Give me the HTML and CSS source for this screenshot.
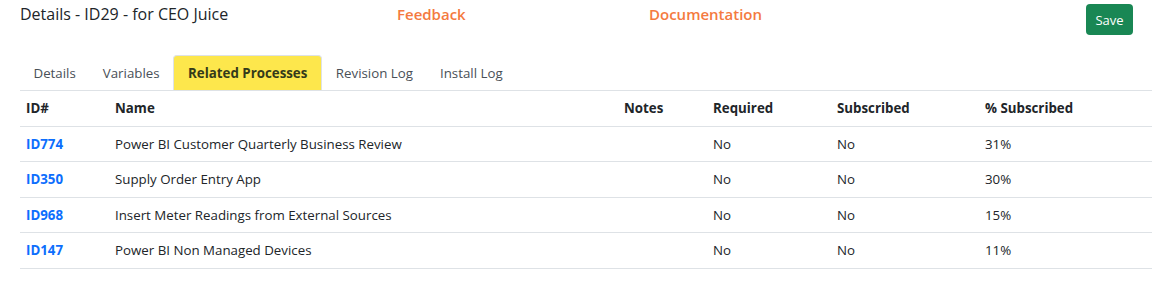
FILE: index.html
```html
<!DOCTYPE html>
<html>
<head>
<meta charset="utf-8">
<link rel="stylesheet" href="styles.css">
</head>
<body>
<div class="page">
  <div class="topbar">
    <div class="title">Details - ID29 - for CEO Juice</div>
    <a class="toplink feedback">Feedback</a>
    <a class="toplink docs">Documentation</a>
    <button class="save">Save</button>
  </div>
  <ul class="tabs">
    <li class="tab">Details</li>
    <li class="tab">Variables</li>
    <li class="tab active">Related Processes</li>
    <li class="tab">Revision Log</li>
    <li class="tab">Install Log</li>
  </ul>
  <table class="grid">
    <colgroup>
      <col class="c-id"><col class="c-name"><col class="c-notes"><col class="c-req"><col class="c-sub"><col class="c-pct">
    </colgroup>
    <thead>
      <tr><th>ID#</th><th>Name</th><th>Notes</th><th>Required</th><th>Subscribed</th><th>% Subscribed</th></tr>
    </thead>
    <tbody>
      <tr><td><a class="idlink">ID774</a></td><td>Power BI Customer Quarterly Business Review</td><td></td><td>No</td><td>No</td><td>31%</td></tr>
      <tr><td><a class="idlink">ID350</a></td><td>Supply Order Entry App</td><td></td><td>No</td><td>No</td><td>30%</td></tr>
      <tr><td><a class="idlink">ID968</a></td><td>Insert Meter Readings from External Sources</td><td></td><td>No</td><td>No</td><td>15%</td></tr>
      <tr><td><a class="idlink">ID147</a></td><td>Power BI Non Managed Devices</td><td></td><td>No</td><td>No</td><td>11%</td></tr>
    </tbody>
  </table>
</div>
</body>
</html>
```
FILE: styles.css
```css
* { box-sizing: border-box; }
html, body { margin: 0; padding: 0; background: #fff; }
body {
  font-family: "Open Sans", "Noto Sans", sans-serif;
  font-size: 13.3px;
  color: #212529;
}
.page { padding: 3px 3px 0 20px; }
.topbar {
  display: flex;
  align-items: flex-start;
  height: 52px;
}
.title {
  font-size: 16px;
  font-weight: 500;
  line-height: 22px;
  width: 377px;
}
.toplink {
  color: #f47a40;
  font-size: 15px;
  font-weight: 600;
  line-height: 22px;
}
.feedback { width: 252px; }
.docs { flex: 1; }
.save {
  background: #198754;
  color: #fff;
  border: none;
  border-radius: 4px;
  font-family: inherit;
  font-size: 13px;
  width: 47px;
  height: 31px;
  padding: 0;
  margin-top: 1px;
  margin-right: 19px;
}
.tabs {
  list-style: none;
  margin: 0;
  padding: 0;
  display: flex;
  border-bottom: 1px solid #dee2e6;
  height: 36px;
}
.tab {
  padding: 0 12.5px;
  line-height: 34px;
  color: #495057;
  border: 1px solid transparent;
  border-bottom: none;
  border-radius: 4px 4px 0 0;
}
.tab.active {
  background: #fde74c;
  border-color: #dee2e6;
  font-weight: 700;
  color: #343a1a;
  padding: 0 14px;
}
.grid {
  width: 1132px;
  border-collapse: collapse;
  table-layout: fixed;
}
.c-id { width: 89px; }
.c-name { width: 509px; }
.c-notes { width: 89px; }
.c-req { width: 124px; }
.c-sub { width: 148px; }
.c-pct { width: 173px; }
.grid th, .grid td {
  text-align: left;
  padding: 0 6px;
  height: 35.5px;
  border-bottom: 1px solid #dee2e6;
  white-space: nowrap;
}
.grid th {
  font-weight: 700;
  height: 35px;
}
.idlink {
  color: #0d6efd;
  font-weight: 700;
}
```
